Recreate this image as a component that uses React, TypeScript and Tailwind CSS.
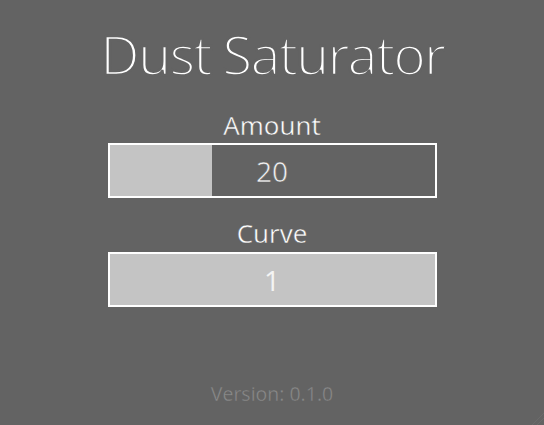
import React from "react";

interface SliderProps {
  label: string;
  value: number;
  fill: number; // filled width in px
  labelGap: number;
}

function Slider({ label, value, fill, labelGap }: SliderProps) {
  const full = fill >= 325;
  return (
    <div className="flex flex-col items-center">
      <div
        className="text-[26px] leading-[32px] text-white [-webkit-text-stroke:0.4px_#636363]"
        style={{ marginBottom: labelGap }}
      >
        {label}
      </div>
      <div className="relative h-[55px] w-[329px] border-2 border-white bg-[#636363]">
        <div className="absolute inset-y-0 left-0 bg-[#c4c4c4]" style={{ width: fill }} />
        <div
          className={
            full
              ? "relative flex h-full items-center justify-center text-[28px] text-[#f4f4f4]"
              : "relative flex h-full items-center justify-center text-[28px] text-[#f2f2f2] [-webkit-text-stroke:0.5px_#636363]"
          }
        >
          {value}
        </div>
      </div>
    </div>
  );
}

export default function App() {
  return (
    <div
      className="relative flex h-[425px] w-[544px] flex-col items-center overflow-hidden bg-[#636363]"
      style={{ fontFamily: '"Open Sans", "DejaVu Sans", sans-serif' }}
    >
      {/* thin title: the stroke in the background colour eats into the regular face */}
      <h1 className="mt-[22px] text-[55px] leading-[64px] tracking-[-2.3px] text-white [-webkit-text-stroke:2.4px_#636363]">
        Dust Saturator
      </h1>

      <div className="mt-[23px] flex flex-col gap-[19px]">
        <Slider label="Amount" value={20} fill={102} labelGap={2} />
        <Slider label="Curve" value={1} fill={325} labelGap={3} />
      </div>

      <div className="mt-auto mb-[17px] text-[19.5px] text-[#8c8c8c] [-webkit-text-stroke:0.4px_#636363]">
        Version: 0.1.0
      </div>

      {/* resize grip */}
      <svg className="absolute right-0 bottom-0" width="16" height="16" viewBox="0 0 16 16">
        <path d="M16 4 L4 16 M16 9 L9 16" stroke="#6b6b6b" strokeWidth="1" />
      </svg>
    </div>
  );
}
